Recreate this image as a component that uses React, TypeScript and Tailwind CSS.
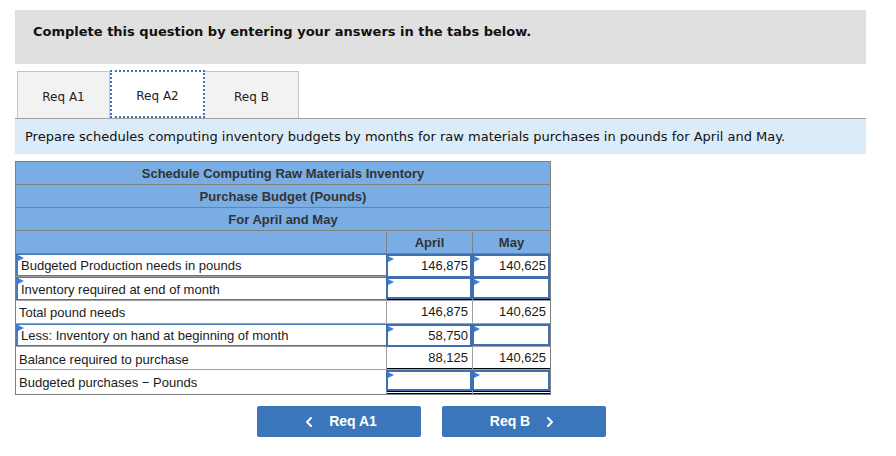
import { ChevronLeft, ChevronRight } from 'lucide-react'

type Cell = { value: string; input: boolean }
type Row = { label: string; inputLabel: boolean; april: Cell; may: Cell; line?: 'single' | 'double' }

const rows: Row[] = [
    { label: 'Budgeted Production needs in pounds', inputLabel: true, april: { value: '146,875', input: true }, may: { value: '140,625', input: true } },
    { label: 'Inventory required at end of month', inputLabel: true, april: { value: '', input: true }, may: { value: '', input: true }, line: 'single' },
    { label: 'Total pound needs', inputLabel: false, april: { value: '146,875', input: false }, may: { value: '140,625', input: false } },
    { label: 'Less: Inventory on hand at beginning of month', inputLabel: true, april: { value: '58,750', input: true }, may: { value: '', input: true } },
    { label: 'Balance required to purchase', inputLabel: false, april: { value: '88,125', input: false }, may: { value: '140,625', input: false }, line: 'single' },
    { label: 'Budgeted purchases − Pounds', inputLabel: false, april: { value: '', input: true }, may: { value: '', input: true }, line: 'double' }
]

const Flag = () => (
    <svg className="absolute left-0 top-0" width="6" height="7" viewBox="0 0 6 7">
        <polygon points="0,0 6,3 0,6" fill="#3b7fd6" />
    </svg>
)

const ValueCell = ({ cell, width, line }: { cell: Cell; width: string; line?: 'single' | 'double' }) => {
    const bottom = line === 'double' ? 'border-b-[3px] border-double border-b-black' : line === 'single' ? 'border-b border-b-black' : ''
    return (
        <div className={`${width} h-full border-l border-[#a0a0a0] flex flex-col`}>
            {cell.input ? (
                <div className="relative flex-1 -ml-px border-2 border-[#3f6fae] bg-white flex items-center justify-end pr-[2px]">
                    <Flag />
                    {cell.value}
                </div>
            ) : (
                <div className="flex-1 flex items-center justify-end pr-[4px]">{cell.value}</div>
            )}
            {line && <div className={`h-0 ${bottom}`} />}
        </div>
    )
}

export default function App() {
    return (
        <div className="w-[896px] h-[456px] bg-white pl-[15px] pt-[10px]" style={{ fontFamily: '"DejaVu Sans", Verdana, sans-serif' }}>
            <div className="w-[851px] h-[54px] bg-[#e0e0e0] pl-[18px] pt-[12px]">
                <p className="text-[13px] font-bold text-[#111]">Complete this question by entering your answers in the tabs below.</p>
            </div>

            <div className="w-[851px] mt-[7px] flex pl-[2px] border-b border-[#a0a0a0] h-[48px]">
                <div className="w-[93px] h-[47px] pt-[3px] bg-[#f2f2f2] border border-b-0 border-[#c4c4c4] flex items-center justify-center text-[12px] text-[#222]">Req A1</div>
                <div className="w-[95px] h-[48px] pt-[3px] bg-white border-2 border-dotted border-[#3d72b8] -mt-[1px] flex items-center justify-center text-[12px] text-[#222]">Req A2</div>
                <div className="w-[94px] h-[47px] pt-[3px] bg-[#f2f2f2] border border-b-0 border-l-0 border-[#c4c4c4] flex items-center justify-center text-[12px] text-[#222]">Req B</div>
            </div>

            <div className="w-[851px] h-[35px] bg-[#dbecf8] flex items-center pl-[10px] pt-[1px]">
                <p className="text-[13px] text-[#111]">Prepare schedules computing inventory budgets by months for raw materials purchases in pounds for April and May.</p>
            </div>

            <div
                className="mt-[7px] w-[536px] border border-[#808080] text-[13px] text-[#1a1a1a]"
                style={{ fontFamily: '"Liberation Sans", Arial, sans-serif' }}
            >
                {['Schedule Computing Raw Materials Inventory', 'Purchase Budget (Pounds)', 'For April and May'].map((t) => (
                    <div key={t} className="h-[23px] pt-[1px] bg-[#79ade3] border-b border-[#808080] flex items-center justify-center font-bold text-[#333]">
                        {t}
                    </div>
                ))}
                <div className="h-[23px] pt-[1px] bg-[#79ade3] border-b border-[#808080] flex font-bold text-[#333]">
                    <div className="w-[370px]" />
                    <div className="w-[86px] border-l border-[#808080] flex items-center justify-center">April</div>
                    <div className="w-[78px] border-l border-[#808080] flex items-center justify-center">May</div>
                </div>
                {rows.map((r, i) => (
                    <div key={r.label} className={`h-[23.3px] flex ${i < rows.length - 1 ? 'border-b border-[#a0a0a0]' : ''}`}>
                        <div
                            className={`relative w-[370px] h-full flex items-center pl-[3px] pt-[2px] ${
                                r.inputLabel ? 'border-l-2 border-y border-[#4a78b8]' : ''
                            }`}
                        >
                            {r.inputLabel && <Flag />}
                            {r.label}
                        </div>
                        <ValueCell cell={r.april} width="w-[86px]" line={r.line} />
                        <ValueCell cell={r.may} width="w-[78px]" line={r.line} />
                    </div>
                ))}
            </div>

            <div className="flex gap-[21px] ml-[242px] mt-[11px]" style={{ fontFamily: '"Liberation Sans", Arial, sans-serif' }}>
                <button className="w-[164px] h-[31px] pt-[1px] rounded-[2px] bg-[#3b76ba] text-white font-bold text-[14px] flex items-center justify-center gap-[12px]">
                    <ChevronLeft size={16} strokeWidth={3} />
                    Req A1
                </button>
                <button className="w-[164px] h-[31px] pt-[1px] rounded-[2px] bg-[#3b76ba] text-white font-bold text-[14px] flex items-center justify-center gap-[12px]">
                    Req B
                    <ChevronRight size={16} strokeWidth={3} />
                </button>
            </div>
        </div>
    )
}
